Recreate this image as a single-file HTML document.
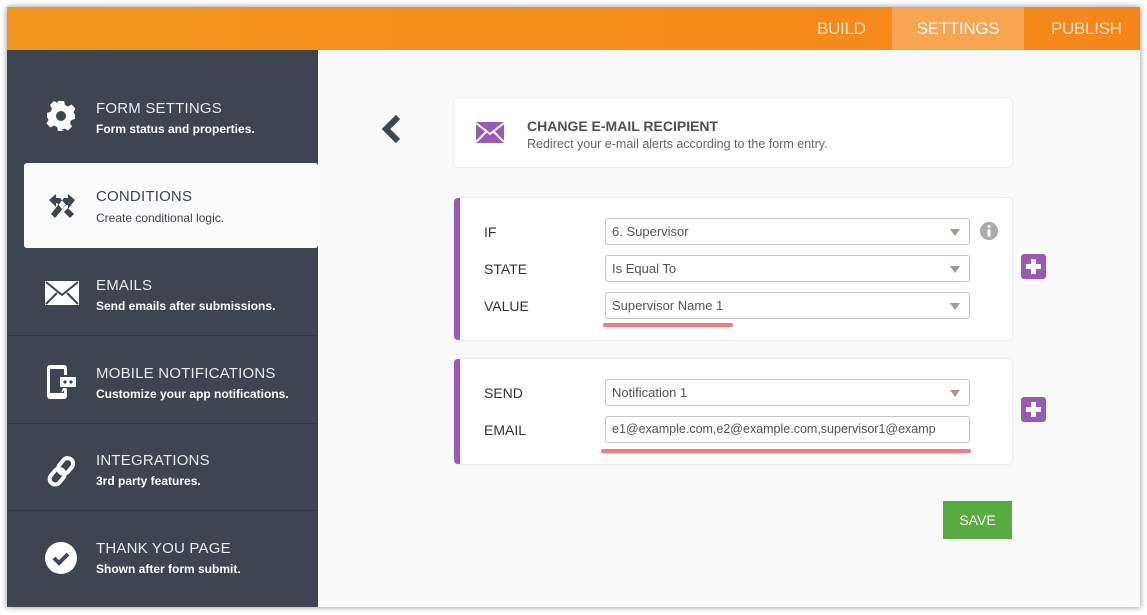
<!DOCTYPE html>
<html><head><style>
*{margin:0;padding:0;box-sizing:border-box}
body{width:1147px;height:615px;background:#fff;font-family:"Liberation Sans",sans-serif;position:relative;overflow:hidden}
.frame{position:absolute;left:7px;top:7px;width:1133px;height:600px;background:#fafafa;box-shadow:0 0 6px rgba(0,0,0,.45)}
.top{position:absolute;left:0;top:0;width:1133px;height:43px;background:linear-gradient(90deg,#f0961c,#f7861a)}
.tab{position:absolute;top:0;height:43px;line-height:43px;color:#fde3c4;font-size:17px;letter-spacing:-.3px}
.side{position:absolute;left:0;top:43px;width:311px;height:557px;background:#3e4550}
.item{position:absolute;left:0;width:311px;height:87px;border-bottom:1px solid #333942;color:#fff}
.item .t{position:absolute;left:89px;top:28px;font-size:15px;letter-spacing:.2px;color:#e8eaec}
.item .s{position:absolute;left:89px;top:50px;font-size:12px;font-weight:bold}
.item svg{position:absolute;left:38px;top:30px}
.act{left:17px;width:294px;background:#fbfbfb;border-radius:3px;color:#3e4550}
.act .t{left:72px;color:#3e4550}.act .s{left:72px;font-weight:normal;color:#3e4550}
.act svg{left:22px}
.card{position:absolute;background:#fff;border-radius:4px;box-shadow:0 0 2px rgba(0,0,0,.15)}
.lbl{position:absolute;left:24px;font-size:14px;color:#333}
.sel{position:absolute;left:145px;width:365px;height:27px;border:1px solid #c6c6c6;border-radius:3px;background:#fff;font-size:13px;color:#555;line-height:25px;padding-left:6px}
.arr:after{content:"";position:absolute;right:9px;top:10px;border-left:5px solid transparent;border-right:5px solid transparent;border-top:7px solid #a89a88}
.plus{position:absolute;width:25px;height:25px;background:#9b59b6;border-radius:3px}
.plus:before{content:"";position:absolute;left:5px;top:10px;width:15px;height:5px;background:#fff}
.plus:after{content:"";position:absolute;left:10px;top:5px;width:5px;height:15px;background:#fff}
.red{position:absolute;height:4px;background:#f77b7b;border-radius:2px}
</style></head><body>
<div class="frame">
<div class="top">
<div class="tab" style="left:810px">BUILD</div>
<div class="tab" style="left:885px;width:132px;background:#f9a552;color:#fff;text-align:center">SETTINGS</div>
<div class="tab" style="left:1044px">PUBLISH</div>
</div>
<div class="side">
<div class="item" style="top:15px;height:98px;border:none"><svg width="32" height="32" viewBox="0 0 32 32" style="top:35px"><path fill="#fff" d="M13 1h6l1 4 3 1.5 3.5-2 4 4-2 3.5L30 15v4l-3.5 1-1.5 3 2 3.5-4 4-3.5-2-3 1.3L19 31h-6l-1-4-3-1.5-3.5 2-4-4 2-3.5L2 17v-4l3.5-1.2L7 8.5 5 5l4-4 3.5 2L13 1z"/><circle cx="16" cy="16" r="5" fill="#3e4550"/></svg><div class="t" style="top:35px">FORM SETTINGS</div><div class="s" style="top:57px">Form status and properties.</div></div>
<div class="item act" style="top:113px;height:85px;border:none"><svg width="32" height="32" viewBox="0 0 32 32" style="top:28px"><path fill="#3e4550" d="M3 9l7-6v4h4l6 7-4 4-5-6H10v4zM29 9l-7-6v4h-4l-9 11-4 5 4 4 5-6 5-7h3v4zM18 21l4-4 6 6-4 4z"/></svg><div class="t" style="top:25px">CONDITIONS</div><div class="s" style="top:48px">Create conditional logic.</div></div>
<div class="item" style="top:199px"><svg width="34" height="28" viewBox="0 0 34 28" style="top:30px"><path fill="#fff" d="M0 2h34v24H0z"/><path fill="none" stroke="#3e4550" stroke-width="2" d="M1 3l16 13L33 3M1 25l11-11M33 25L22 14"/></svg><div class="t">EMAILS</div><div class="s">Send emails after submissions.</div></div>
<div class="item" style="top:287px"><svg width="34" height="36" viewBox="0 0 34 36" style="top:27px"><rect x="2" y="1" width="20" height="34" rx="3" fill="#fff"/><rect x="5" y="5" width="14" height="24" fill="#3e4550"/><rect x="14" y="12" width="18" height="12" rx="2" fill="#fff" stroke="#3e4550" stroke-width="2"/><path d="M18 24l-2 5 6-5z" fill="#fff"/><circle cx="20" cy="18" r="1.6" fill="#3e4550"/><circle cx="26" cy="18" r="1.6" fill="#3e4550"/></svg><div class="t">MOBILE NOTIFICATIONS</div><div class="s">Customize your app notifications.</div></div>
<div class="item" style="top:374px"><svg width="34" height="34" viewBox="0 0 34 34" style="top:30px"><g fill="none" stroke="#fff" stroke-width="4"><rect x="15" y="3" width="11" height="17" rx="5.5" transform="rotate(40 20 12)"/><rect x="7" y="14" width="11" height="17" rx="5.5" transform="rotate(40 12 22)"/></g></svg><div class="t">INTEGRATIONS</div><div class="s">3rd party features.</div></div>
<div class="item" style="top:462px;border:none"><svg width="34" height="34" viewBox="0 0 34 34" style="top:30px"><circle cx="16" cy="16" r="16" fill="#fff"/><path d="M9 16l5 5 9-9" fill="none" stroke="#3e4550" stroke-width="4"/></svg><div class="t">THANK YOU PAGE</div><div class="s">Shown after form submit.</div></div>
</div>
<svg width="24" height="34" viewBox="0 0 24 34" style="position:absolute;left:372px;top:106px"><path d="M19 4L7 16l12 12" fill="none" stroke="#3e4550" stroke-width="6"/></svg>
<div class="card" style="left:447px;top:91px;width:558px;height:69px">
<svg width="28" height="21" viewBox="0 0 28 21" style="position:absolute;left:22px;top:24px"><rect width="28" height="21" fill="#9b59b6"/><path d="M0 1l14 11L28 1M0 20l10-10M28 20L18 10" fill="none" stroke="#fff" stroke-width="2"/></svg>
<div style="position:absolute;left:73px;top:20px;font-size:14px;font-weight:bold;color:#4b5059">CHANGE E-MAIL RECIPIENT</div>
<div style="position:absolute;left:73px;top:39px;font-size:12.5px;color:#666">Redirect your e-mail alerts according to the form entry.</div>
</div>
<div class="card" style="left:447px;top:191px;width:558px;height:142px;border-left:6px solid #9b59b6">
<div class="lbl" style="top:26px">IF</div><div class="sel arr" style="top:20px">6. Supervisor</div>
<div class="lbl" style="top:63px">STATE</div><div class="sel arr" style="top:57px">Is Equal To</div>
<div class="lbl" style="top:100px">VALUE</div><div class="sel arr" style="top:94px">Supervisor Name 1</div>
<div class="red" style="left:143px;top:125px;width:130px"></div>
<svg width="18" height="18" viewBox="0 0 18 18" style="position:absolute;left:520px;top:24px"><circle cx="9" cy="9" r="9" fill="#aaa"/><rect x="7.5" y="7.5" width="3" height="7" fill="#fff"/><circle cx="9" cy="4.5" r="1.6" fill="#fff"/></svg>
</div>
<div class="plus" style="left:1014px;top:247px"></div>
<div class="card" style="left:447px;top:352px;width:558px;height:105px;border-left:6px solid #9b59b6">
<div class="lbl" style="top:26px">SEND</div><div class="sel arr" style="top:20px">Notification 1</div>
<div class="lbl" style="top:63px">EMAIL</div><div class="sel" style="top:57px;overflow:hidden;white-space:nowrap;padding-right:2px;font-size:12.5px">e1@example.com,e2@example.com,supervisor1@examp</div>
<div class="red" style="left:141px;top:90px;width:370px"></div>
</div>
<div class="plus" style="left:1014px;top:390px"></div>
<div style="position:absolute;left:936px;top:494px;width:69px;height:38px;background:#58ab3f;color:#fff;font-size:14px;text-align:center;line-height:38px">SAVE</div>
</div>
</body></html>
